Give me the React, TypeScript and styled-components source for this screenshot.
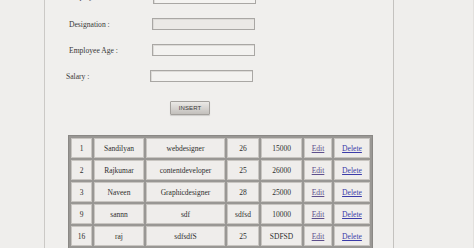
import React from "react";
import styled, { createGlobalStyle } from "styled-components";

const Global = createGlobalStyle`
  html, body { margin: 0; padding: 0; background: #efeeec; overflow: hidden; }
  body { width: 474px; height: 248px; }
  #root { height: 248px; }
`;

const Page = styled.div`
  display: flex;
  height: 248px;
  overflow: hidden;
  background: #efeeec;
  font-family: "Liberation Serif", "Times New Roman", serif;
  color: #383838;
`;

const Gutter = styled.div<{ $w: number }>`
  width: ${(p) => p.$w}px;
  flex: none;
`;

const Main = styled.div`
  width: 350px;
  flex: none;
  box-sizing: border-box;
  border-left: 1px solid #cbc9c6;
  border-right: 1px solid #c4c2bf;
  background: #f0efed;
  padding-left: 23px;
`;

const Side = styled.div`
  flex: 1;
  border-right: 1px solid #e2e0dd;
  background: #efeeec;
`;

const Form = styled.div`
  display: grid;
  grid-template-columns: 84px 1fr;
  grid-auto-rows: 26px;
  margin-top: -15px;
`;

const Label = styled.div<{ $shift?: number; $lift?: number }>`
  display: flex;
  align-items: center;
  font-size: 7.6px;
  margin-left: ${(p) => p.$shift ?? 0}px;
  margin-top: ${(p) => -(p.$lift ?? 0)}px;
`;

const Field = styled.div<{ $shift?: number }>`
  display: flex;
  align-items: center;
  margin-left: ${(p) => p.$shift ?? 0}px;
`;

const Input = styled.div<{ $tint?: string }>`
  width: 103px;
  height: 12px;
  box-sizing: border-box;
  border: 1px solid #a9a7a4;
  background: ${(p) => p.$tint ?? "#f3f2f0"};
  box-shadow: inset 1px 1px 0 #dddbd8;
`;

const ButtonRow = styled.div`
  padding: 7px 0 0 102px;
  height: 14px;
`;

const Button = styled.button`
  width: 40px;
  height: 14px;
  padding: 0;
  border: 1px solid #a3a09c;
  border-radius: 1px;
  background: linear-gradient(#ebe9e6, #c3c0bc);
  box-shadow: 0 1px 1px rgba(0, 0, 0, 0.15);
  font-family: "Liberation Sans", Arial, sans-serif;
  font-size: 6px;
  color: #3a3a3a;
  letter-spacing: 0.1px;
`;

const Table = styled.table`
  margin-top: 25px;
  width: 305px;
  table-layout: fixed;
  border: 1px solid #8a8885;
  border-spacing: 2px;
  background: #999794;
`;

const Cell = styled.td`
  height: 20px;
  box-sizing: border-box;
  padding: 0;
  text-align: center;
  vertical-align: middle;
  background: #efedeb;
  border: 1px solid #c8c5c1;
  font-size: 7.5px;
  color: #2e2e2e;
  white-space: nowrap;
  overflow: hidden;
`;

const Link = styled.a<{ $visited?: boolean }>`
  color: ${(p) => (p.$visited ? "#5e4f8c" : "#3b3ba8")};
  text-decoration: underline;
  font-size: 7.6px;
`;

const cols = [21, 50, 79, 32, 41, 28, 36];

const rows = [
  ["1", "Sandilyan", "webdesigner", "26", "15000"],
  ["2", "Rajkumar", "contentdeveloper", "25", "26000"],
  ["3", "Naveen", "Graphicdesigner", "28", "25000"],
  ["9", "sannn", "sdf", "sdfsd", "10000"],
  ["16", "raj", "sdfsdfS", "25", "SDFSD"],
  ["17", "kumar", "designer", "24", "12000"],
];

const fields = [
  { label: "Employee Name :", shift: 1, fshift: 1, lift: 4, tint: "#f4f3f1" },
  { label: "Designation :", shift: 1, fshift: 0, lift: 0, tint: "#ebe9e6" },
  { label: "Employee Age :", shift: 1, fshift: 0, lift: 0, tint: "#f3f2f0" },
  { label: "Salary :", shift: -2, fshift: -2, lift: 0, tint: "#f3f2f0" },
];

export default function App() {
  return (
    <>
      <Global />
      <Page>
        <Gutter $w={44} />
        <Main>
          <Form>
            {fields.map((f) => (
              <React.Fragment key={f.label}>
                <Label $shift={f.shift} $lift={f.lift}>
                  {f.label}
                </Label>
                <Field $shift={f.fshift}>
                  <Input $tint={f.tint} />
                </Field>
              </React.Fragment>
            ))}
          </Form>
          <ButtonRow>
            <Button>INSERT</Button>
          </ButtonRow>
          <Table>
            <colgroup>
              {cols.map((w, i) => (
                <col key={i} style={{ width: w }} />
              ))}
            </colgroup>
            <tbody>
              {rows.map((r) => (
                <tr key={r[0]}>
                  {r.map((c, i) => (
                    <Cell key={i}>{c}</Cell>
                  ))}
                  <Cell>
                    <Link $visited href="#">Edit</Link>
                  </Cell>
                  <Cell>
                    <Link href="#">Delete</Link>
                  </Cell>
                </tr>
              ))}
            </tbody>
          </Table>
        </Main>
        <Side />
      </Page>
    </>
  );
}
